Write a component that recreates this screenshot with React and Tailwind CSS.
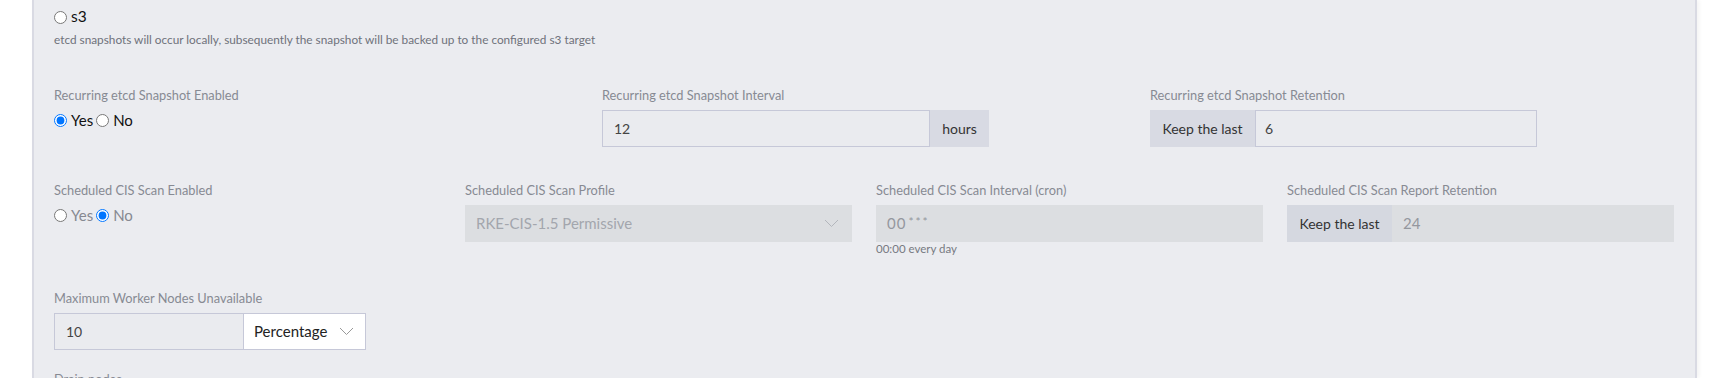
import React from "react";

const font = { fontFamily: "Lato, 'Noto Sans', sans-serif" };

function Chevron({ className }) {
  return (
    <svg className={className} width="15" height="9" viewBox="0 0 15 9" fill="none">
      <path d="M1 1 L7.5 7.5 L14 1" stroke="currentColor" strokeWidth="1" />
    </svg>
  );
}

function Radio({ checked, label, labelClass }) {
  return (
    <label className="flex items-center">
      <input
        type="radio"
        defaultChecked={checked}
        className="m-0 w-[13px] h-[13px] mr-[4px]"
      />
      <span className={labelClass}>{label}</span>
    </label>
  );
}

function Label({ children }) {
  return (
    <div className="text-[12.8px] leading-[16px] text-[#878a93] mb-[7px] whitespace-nowrap">
      {children}
    </div>
  );
}

export default function App() {
  return (
    <div className="w-full h-[378px] bg-white overflow-hidden flex" style={font}>
      <div className="ml-[32px] w-[1665px] h-full bg-[#ebecf0] border-l-2 border-r-2 border-[#d9dae3] pl-[20px] pr-[21px] shadow-[2px_0_4px_rgba(0,0,0,0.05)]">
        {/* s3 option */}
        <div className="mt-[7px] h-[20px] flex items-center">
          <Radio checked={false} label="s3" labelClass="text-[15.5px] text-[#111]" />
        </div>
        <div className="mt-[5px] text-[11.8px] leading-[16px] text-[#6f727b] whitespace-nowrap">
          etcd snapshots will occur locally, subsequently the snapshot will be backed up to the configured s3 target
        </div>

        {/* Row 1 */}
        <div className="mt-[39px] grid grid-cols-3 gap-x-6 items-start">
          <div>
            <Label>Recurring etcd Snapshot Enabled</Label>
            <div className="h-[20px] flex items-center">
              <Radio checked={true} label="Yes" labelClass="text-[15px] text-[#111] mr-[3px]" />
              <Radio checked={false} label="No" labelClass="text-[15px] text-[#111]" />
            </div>
          </div>
          <div>
            <Label>Recurring etcd Snapshot Interval</Label>
            <div className="flex w-[387px] h-[37px]">
              <div className="w-[328px] border border-[#c6c8d8] bg-[#eaebef] flex items-center pl-[11px] text-[14px] text-[#444]">
                12
              </div>
              <div className="flex-1 bg-[#d8dae3] flex items-center justify-center text-[14px] text-[#333]">
                hours
              </div>
            </div>
          </div>
          <div>
            <Label>Recurring etcd Snapshot Retention</Label>
            <div className="flex w-[387px] h-[37px]">
              <div className="w-[105px] bg-[#d8dae3] flex items-center justify-center text-[14px] text-[#333]">
                Keep the last
              </div>
              <div className="flex-1 border border-[#c6c8d8] bg-[#eaebef] flex items-center pl-[9px] text-[14px] text-[#444]">
                6
              </div>
            </div>
          </div>
        </div>

        {/* Row 2 */}
        <div className="mt-[35px] grid grid-cols-4 gap-x-6 items-start">
          <div>
            <Label>Scheduled CIS Scan Enabled</Label>
            <div className="h-[20px] flex items-center">
              <Radio checked={false} label="Yes" labelClass="text-[15px] text-[#868991] mr-[3px]" />
              <Radio checked={true} label="No" labelClass="text-[15px] text-[#868991]" />
            </div>
          </div>
          <div>
            <Label>Scheduled CIS Scan Profile</Label>
            <div className="w-[387px] h-[37px] bg-[#dcdee1] flex items-center justify-between pl-[11px] pr-[13px] text-[15px] text-[#a3a6ad]">
              <span>RKE-CIS-1.5 Permissive</span>
              <Chevron className="text-[#b3b6bc]" />
            </div>
          </div>
          <div>
            <Label>Scheduled CIS Scan Interval (cron)</Label>
            <div className="w-[387px] h-[37px] bg-[#dcdee1] flex items-center pl-[11px] text-[15px] text-[#94979e]">
              <span>0</span>
              <span className="ml-[1px]">0</span>
              <span className="ml-[3px] text-[12px] tracking-[2px] -translate-y-[2px]">***</span>
            </div>
            <div className="h-[13px] text-[11.5px] leading-[13px] text-[#777a82] whitespace-nowrap">
              00:00 every day
            </div>
          </div>
          <div>
            <Label>Scheduled CIS Scan Report Retention</Label>
            <div className="flex w-[387px] h-[37px] bg-[#dcdee1]">
              <div className="w-[105px] bg-[#d5d8e0] flex items-center justify-center text-[14px] text-[#333]">
                Keep the last
              </div>
              <div className="flex-1 flex items-center pl-[11px] text-[15px] text-[#94979e]">
                24
              </div>
            </div>
          </div>
        </div>

        {/* Row 3 */}
        <div className="mt-[35px]">
          <Label>Maximum Worker Nodes Unavailable</Label>
          <div className="flex h-[37px]">
            <div className="w-[190px] border border-[#c6c8d8] bg-[#eaebef] flex items-center pl-[11px] text-[14px] text-[#444]">
              10
            </div>
            <div className="w-[122px] border border-l-0 border-[#c6c8d8] bg-white flex items-center justify-between pl-[10px] pr-[11px] text-[15px] text-[#222]">
              <span>Percentage</span>
              <Chevron className="text-[#999]" />
            </div>
          </div>
        </div>

        <div className="mt-[21px] text-[12.8px] leading-[16px] text-[#878a93]">Drain nodes</div>
      </div>
    </div>
  );
}
